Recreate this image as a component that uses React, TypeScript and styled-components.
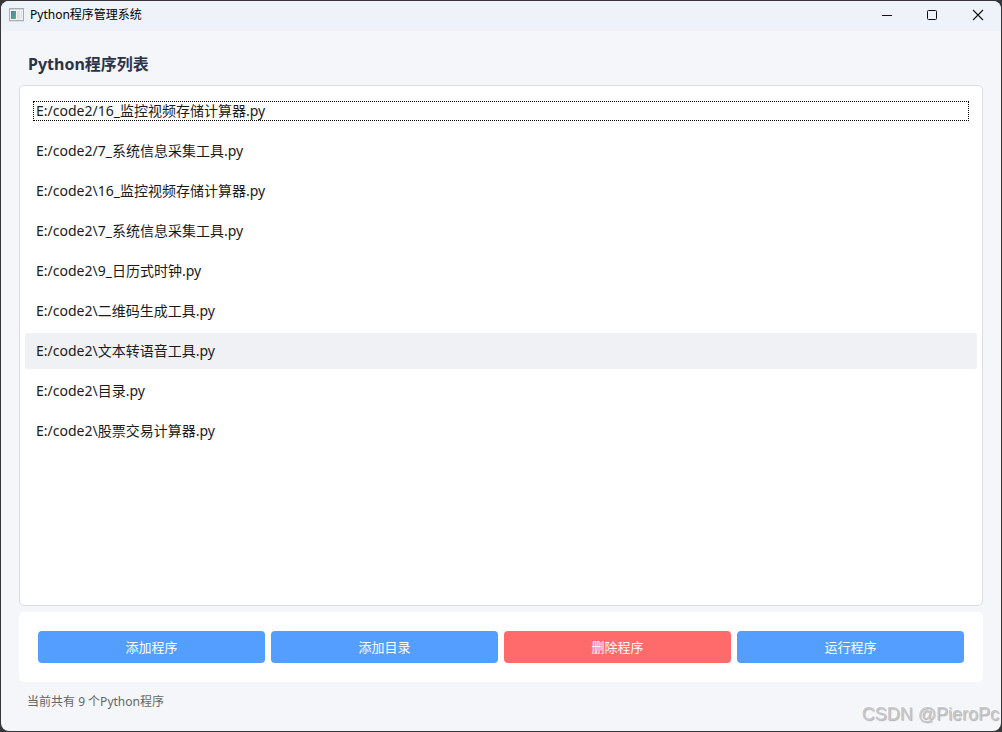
import React, { useState } from 'react';
import styled, { createGlobalStyle } from 'styled-components';

const GlobalStyle = createGlobalStyle`
  *, *::before, *::after { box-sizing: border-box; }
  body {
    margin: 0;
    background: #37373a;
    color: #1a1a1a;
    font-family: "Noto Sans", "Noto Sans CJK SC", sans-serif;
  }
  button { font-family: inherit; cursor: pointer; }
`;

const Desktop = styled.div`
  display: flex;
  min-height: 100vh;
  padding: 1px;
`;

const Window = styled.main`
  position: relative;
  flex: 1;
  min-width: 0;
  display: flex;
  flex-direction: column;
  overflow: hidden;
  border-radius: 8px;
  background: #f4f6fa;
`;

const TitleBar = styled.header`
  display: flex;
  align-items: center;
  height: 30px;
  padding: 0 0 2px 8px;
  background: #eef3fa;
`;

const WindowTitle = styled.span`
  flex: 1;
  margin-left: 6px;
  font-size: 12px;
  line-height: 16px;
  color: #000;
`;

const WindowButton = styled.button`
  display: flex;
  align-items: center;
  justify-content: center;
  width: 46px;
  height: 28px;
  padding: 0;
  border: 0;
  background: transparent;
  color: #111;
`;

const Content = styled.div`
  flex: 1;
  display: flex;
  flex-direction: column;
  padding: 21px 18px 20px;
`;

const Heading = styled.h1`
  margin: 0;
  padding: 0 9px 9px;
  font-size: 16px;
  line-height: 24px;
  font-weight: 700;
  color: #2c3248;
`;

const ProgramList = styled.ul`
  flex: 1;
  margin: 0;
  padding: 5px;
  border: 1px solid #dcdde1;
  border-radius: 5px;
  background: #fff;
  list-style: none;
`;

const ProgramItem = styled.li`
  padding: 2px 0;
`;

const ProgramButton = styled.button<{ $hovered: boolean }>`
  display: block;
  width: 100%;
  padding: 8px;
  border: 0;
  border-radius: 3px;
  background: ${(p) => (p.$hovered ? '#f0f1f5' : 'transparent')};
  text-align: left;
  outline: none;
`;

const ProgramPath = styled.span<{ $current: boolean }>`
  display: block;
  height: 20px;
  padding: 0 2px;
  border: 1px dotted ${(p) => (p.$current ? '#000' : 'transparent')};
  font-size: 14px;
  line-height: 18px;
  color: #1a1a1a;
`;

const ActionPanel = styled.div`
  display: flex;
  gap: 6px;
  margin-top: 6px;
  padding: 19px;
  border-radius: 5px;
  background: #fff;
`;

const ActionButton = styled.button<{ $danger?: boolean }>`
  flex: 1;
  height: 32px;
  padding: 0;
  border: 0;
  border-radius: 4px;
  background: ${(p) => (p.$danger ? '#ff6b6b' : '#549eff')};
  color: #fff;
  font-size: 13px;
  line-height: 20px;
`;

const Status = styled.p`
  margin: 0;
  padding: 11px 8px 0;
  font-size: 12px;
  line-height: 18px;
  color: #666;
`;

const Watermark = styled.span`
  position: absolute;
  right: 2px;
  bottom: 6px;
  font-family: "Liberation Sans", sans-serif;
  font-size: 18px;
  line-height: 22px;
  color: #c6c7ca;
  text-shadow: 1px 1px 1px #b0b0b3, -1px -1px 0 #fff;
  pointer-events: none;
`;

const AppIcon = () => (
  <svg width="15" height="14" viewBox="0 0 15 14" aria-hidden="true">
    <defs>
      <linearGradient id="pane" x1="0" y1="0" x2="1" y2="1">
        <stop offset="0" stopColor="#4a7fa8" />
        <stop offset="1" stopColor="#5cb08e" />
      </linearGradient>
    </defs>
    <rect x="0.5" y="0.5" width="14" height="12" fill="#f2f3f4" stroke="#a9adb0" />
    <rect x="1" y="1" width="13" height="1" fill="#d3d7da" />
    <rect x="2" y="3" width="5" height="8" fill="url(#pane)" />
    <rect x="8" y="3" width="3" height="8" fill="#e0e2e4" />
    <rect x="12" y="3" width="1" height="8" fill="#dcdfe1" />
    <rect x="0" y="13" width="15" height="1" fill="#dde1e6" />
  </svg>
);

const programs = [
  'E:/code2/16_监控视频存储计算器.py',
  'E:/code2/7_系统信息采集工具.py',
  'E:/code2\\16_监控视频存储计算器.py',
  'E:/code2\\7_系统信息采集工具.py',
  'E:/code2\\9_日历式时钟.py',
  'E:/code2\\二维码生成工具.py',
  'E:/code2\\文本转语音工具.py',
  'E:/code2\\目录.py',
  'E:/code2\\股票交易计算器.py',
];

export default function App() {
  const [current, setCurrent] = useState(0);
  const [hovered, setHovered] = useState(6);

  return (
    <>
      <GlobalStyle />
      <Desktop>
        <Window>
          <TitleBar>
            <AppIcon />
            <WindowTitle>Python程序管理系统</WindowTitle>
            <WindowButton type="button" aria-label="最小化">
              <svg width="12" height="12" viewBox="0 0 12 12">
                <path d="M2 6.5H12" stroke="currentColor" />
              </svg>
            </WindowButton>
            <WindowButton type="button" aria-label="最大化">
              <svg width="12" height="12" viewBox="0 0 12 12">
                <rect x="1.5" y="1.5" width="9" height="9" rx="1" fill="none" stroke="currentColor" />
              </svg>
            </WindowButton>
            <WindowButton type="button" aria-label="关闭">
              <svg width="12" height="12" viewBox="0 0 12 12">
                <path d="M1 1L11 11M11 1L1 11" stroke="currentColor" strokeWidth="1.1" />
              </svg>
            </WindowButton>
          </TitleBar>
          <Content>
            <Heading>Python程序列表</Heading>
            <ProgramList>
              {programs.map((path, i) => (
                <ProgramItem key={path}>
                  <ProgramButton
                    type="button"
                    $hovered={i === hovered}
                    onClick={() => setCurrent(i)}
                    onMouseEnter={() => setHovered(i)}
                  >
                    <ProgramPath $current={i === current}>{path}</ProgramPath>
                  </ProgramButton>
                </ProgramItem>
              ))}
            </ProgramList>
            <ActionPanel>
              <ActionButton type="button">添加程序</ActionButton>
              <ActionButton type="button">添加目录</ActionButton>
              <ActionButton type="button" $danger>删除程序</ActionButton>
              <ActionButton type="button">运行程序</ActionButton>
            </ActionPanel>
            <Status>当前共有 {programs.length} 个Python程序</Status>
          </Content>
          <Watermark>CSDN @PieroPc</Watermark>
        </Window>
      </Desktop>
    </>
  );
}
